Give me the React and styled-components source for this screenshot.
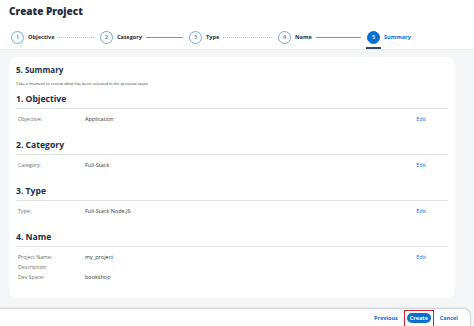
import React from 'react';
import styled, { createGlobalStyle } from 'styled-components';

const GlobalStyle = createGlobalStyle`
  html, body {
    margin: 0;
    padding: 0;
    background: #ffffff;
  }
  body {
    font-family: "Open Sans", "Liberation Sans", sans-serif;
    color: #32363a;
  }
  * {
    box-sizing: border-box;
  }
`;

const steps = [
  { n: 1, label: 'Objective', line: 'dashed' },
  { n: 2, label: 'Category', line: 'solid' },
  { n: 3, label: 'Type', line: 'dashed' },
  { n: 4, label: 'Name', line: 'solid' },
  { n: 5, label: 'Summary', active: true },
];

const sections = [
  { title: '1. Objective', rows: [['Objective:', 'Application']] },
  { title: '2. Category', rows: [['Category:', 'Full-Stack']] },
  { title: '3. Type', rows: [['Type:', 'Full-Stack Node.JS']] },
  {
    title: '4. Name',
    rows: [
      ['Project Name:', 'my_project'],
      ['Description:', ''],
      ['Dev Space:', 'bookshop'],
    ],
  },
];

const App = () => {
  return (
    <Page>
      <GlobalStyle />
      <Header>
        <Title>Create Project</Title>
        <Stepper>
          {steps.map((s) => (
            <Step key={s.n} last={!s.line}>
              <CircleCell active={s.active}>
                <Circle active={s.active}>{s.n}</Circle>
              </CircleCell>
              <StepLabel active={s.active}>{s.label}</StepLabel>
              {s.line && <Connector dashed={s.line === 'dashed'} />}
            </Step>
          ))}
        </Stepper>
      </Header>

      <Content>
        <Card>
          <CardTitle>5. Summary</CardTitle>
          <Description>
            Take a moment to review what has been selected in the previous steps
          </Description>
          {sections.map((sec) => (
            <Section key={sec.title}>
              <SectionTitle>{sec.title}</SectionTitle>
              <Rows>
                {sec.rows.map(([label, value], i) => (
                  <Row key={label}>
                    <Label>{label}</Label>
                    <Value>{value}</Value>
                    <EditLink>{i === 0 ? 'Edit' : ''}</EditLink>
                  </Row>
                ))}
              </Rows>
            </Section>
          ))}
        </Card>
      </Content>

      <Footer>
        <TextButton>Previous</TextButton>
        <Highlight>
          <PrimaryButton>Create</PrimaryButton>
        </Highlight>
        <TextButton>Cancel</TextButton>
      </Footer>
    </Page>
  );
};

export default App;

// Styled Components
const Page = styled.div`
  width: 474px;
  height: 326px;
  display: flex;
  flex-direction: column;
  overflow: hidden;
  background: #f5f6f7;
`;

const Header = styled.div`
  background: #ffffff;
  height: 50px;
  flex-shrink: 0;
  display: flex;
  flex-direction: column;
  border-bottom: 1px solid #e8e9ea;
`;

const Title = styled.h1`
  margin: 0;
  height: 26px;
  padding: 4px 0 0 9px;
  font-size: 10px;
  font-weight: 800;
  color: #1d2d3e;
  line-height: 14px;
`;

const Stepper = styled.div`
  display: flex;
  align-items: stretch;
  height: 24px;
  padding-left: 10px;
`;

const Step = styled.div`
  display: flex;
  align-items: center;
  width: ${(p) => (p.last ? 'auto' : '89px')};
  flex-shrink: 0;
`;

const CircleCell = styled.div`
  align-self: stretch;
  display: flex;
  align-items: center;
  padding: 2px 1px 0;
  border-bottom: 2px solid ${(p) => (p.active ? '#354a5f' : 'transparent')};
`;

const Circle = styled.div`
  width: 13px;
  height: 13px;
  border-radius: 50%;
  border: 1px solid ${(p) => (p.active ? '#0a6ed1' : '#7aa7dc')};
  background: ${(p) => (p.active ? '#0a6ed1' : '#ffffff')};
  color: ${(p) => (p.active ? '#ffffff' : '#5b738b')};
  font-size: 5.5px;
  font-weight: 600;
  display: flex;
  align-items: center;
  justify-content: center;
`;

const StepLabel = styled.span`
  margin-left: 3px;
  font-size: 5.6px;
  font-weight: 700;
  color: ${(p) => (p.active ? '#0a6ed1' : '#1d2d3e')};
  white-space: nowrap;
`;

const Connector = styled.div`
  flex: 1;
  margin: 0 5px 0 4px;
  border-top: 1px ${(p) => (p.dashed ? 'dotted #b5bcc4' : 'solid #8396a9')};
`;

const Content = styled.div`
  flex: 1;
  padding: 7px 19px 0 9px;
`;

const Card = styled.div`
  background: #ffffff;
  border-radius: 6px;
  height: 241px;
  padding: 6px 7px 0;
`;

const CardTitle = styled.h2`
  margin: 0;
  font-size: 8px;
  font-weight: 700;
  line-height: 14px;
  color: #1d2d3e;
`;

const Description = styled.p`
  margin: 1px 0 0;
  font-size: 4px;
  line-height: 12px;
  color: #32363a;
`;

const Section = styled.div`
  margin-bottom: 12px;
`;

const SectionTitle = styled.h3`
  margin: 0;
  height: 19px;
  padding-top: 2px;
  font-size: 8.6px;
  font-weight: 700;
  line-height: 14px;
  color: #1d2d3e;
  border-bottom: 1px solid #e1e3e5;
`;

const Rows = styled.div`
  padding: 5px 0 0 2px;
`;

const Row = styled.div`
  display: flex;
  align-items: center;
  height: 10px;
  padding-right: 22px;
`;

const Label = styled.span`
  width: 67px;
  font-size: 5.2px;
  color: #6a6d70;
`;

const Value = styled.span`
  flex: 1;
  font-size: 5.5px;
  color: #32363a;
`;

const EditLink = styled.span`
  font-size: 5.5px;
  color: #0a6ed1;
`;

const Footer = styled.div`
  height: 18px;
  flex-shrink: 0;
  width: 471px;
  background: #ffffff;
  border-top: 1px solid #d5d8db;
  border-right: 1px solid #d5d8db;
  border-top-right-radius: 8px;
  box-shadow: 0 -1px 2px rgba(0, 0, 0, 0.06);
  display: flex;
  align-items: center;
  justify-content: flex-end;
  gap: 3px;
  padding-right: 9px;
`;

const TextButton = styled.button`
  border: none;
  background: none;
  padding: 0 3px;
  font-family: inherit;
  font-size: 5.5px;
  font-weight: 700;
  color: #0a6ed1;
`;

const Highlight = styled.div`
  border: 1.5px solid #d21f2a;
  padding: 2px 2px 3px;
  display: flex;
  align-self: flex-end;
  margin-bottom: -1px;
`;

const PrimaryButton = styled.button`
  border: none;
  background: #0a6ed1;
  color: #ffffff;
  border-radius: 5px;
  width: 24px;
  height: 10px;
  padding: 0;
  font-family: inherit;
  font-size: 5.5px;
  font-weight: 700;
`;
